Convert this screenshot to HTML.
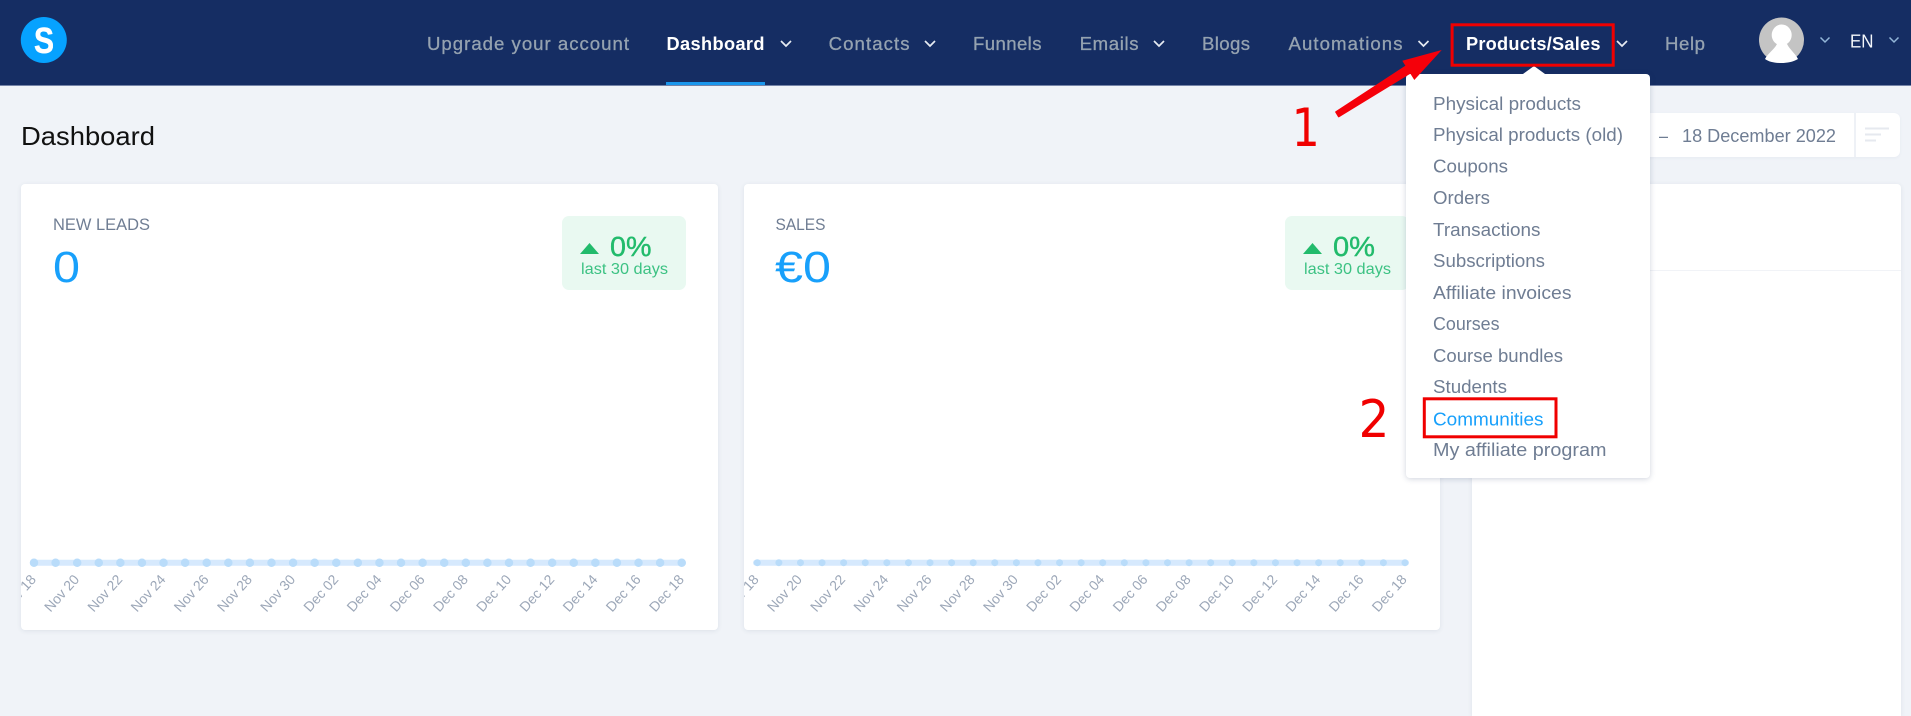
<!DOCTYPE html>
<html lang="en">
<head>
<meta charset="utf-8">
<title>Dashboard</title>
<style>
html,body{margin:0;padding:0;width:1911px;height:716px;overflow:hidden;background:#f0f3f8;font-family:"Liberation Sans",sans-serif}
body{position:relative}
.abs{position:absolute;box-sizing:border-box}
.header{left:0;top:0;width:1911px;height:86px;background:#152d63;border-bottom:1px solid #7584a8}
.active{left:666px;top:82px;width:99px;height:3px;background:#1a96ec}
.card{background:#fff;border-radius:4px;box-shadow:0 1px 5px rgba(60,80,110,.10)}
.badge{background:#e9f9f1;border-radius:7px}
.date{left:1500px;top:113px;width:400px;height:44px;background:#fff;border-radius:6px;box-shadow:0 1px 3px rgba(60,80,110,.05)}
.sep{left:1854px;top:113px;width:2px;height:44px;background:#eef1f6}
.menu{left:1406px;top:74px;width:244px;height:404px;background:#fff;border-radius:4px;box-shadow:0 1px 6px rgba(40,60,100,.22)}
.caret{left:1523px;top:66px;width:0;height:0;border-left:11px solid transparent;border-right:11px solid transparent;border-bottom:8px solid #fff}
svg{position:absolute;left:0;top:0}
.nav{font-size:18.6px;fill:#95a2b0;stroke:#95a2b0;stroke-width:.3}
.on{font-size:18.2px;fill:#fff;font-weight:bold}
.m{font-size:18.5px;fill:#6f7d93}
.l{font-size:14px;fill:#9ca7b8}
.chev{fill:none;stroke:#e6ebf2;stroke-width:1.7}
</style>
</head>
<body>
<div class="abs header"></div>
<div class="abs active"></div>

<div class="abs card" style="left:21px;top:184px;width:697px;height:446px"></div>
<div class="abs card" style="left:744px;top:184px;width:696px;height:446px"></div>
<div class="abs card" style="left:1472px;top:184px;width:429px;height:532px;border-radius:4px 4px 0 0"></div>
<div class="abs" style="left:1472px;top:270px;width:429px;height:1px;background:#f1f3f7"></div>
<div class="abs badge" style="left:562px;top:216px;width:124px;height:74px"></div>
<div class="abs badge" style="left:1285px;top:216px;width:124px;height:74px"></div>
<div class="abs date"></div>
<div class="abs sep"></div>

<svg width="1911" height="716" viewBox="0 0 1911 716" xmlns="http://www.w3.org/2000/svg">
<defs>
<clipPath id="c1"><rect x="21" y="540" width="697" height="90"/></clipPath>
<clipPath id="c2"><rect x="744" y="540" width="696" height="90"/></clipPath>
</defs>
<text x="21" y="145" font-size="26" fill="#111" textLength="134" lengthAdjust="spacingAndGlyphs">Dashboard</text>

<text x="53" y="230" font-size="17" fill="#6f7d93" textLength="97" lengthAdjust="spacingAndGlyphs">NEW LEADS</text>
<text x="53" y="282" font-size="44" fill="#18a0fb" textLength="27" lengthAdjust="spacingAndGlyphs">0</text>
<path d="M580 254L589.5 243L599 254Z" fill="#22bb6c"/>
<text x="610" y="256" font-size="28" fill="#22bb6c" stroke="#22bb6c" stroke-width=".4" textLength="41.5" lengthAdjust="spacingAndGlyphs">0%</text>
<text x="581" y="274" font-size="16" fill="#3cc283" textLength="87" lengthAdjust="spacingAndGlyphs">last 30 days</text>

<text x="775.5" y="230" font-size="17" fill="#6f7d93" textLength="50" lengthAdjust="spacingAndGlyphs">SALES</text>
<text x="775" y="282" font-size="44" fill="#18a0fb" textLength="56" lengthAdjust="spacingAndGlyphs">€0</text>
<path d="M1303 254L1312.5 243L1322 254Z" fill="#22bb6c"/>
<text x="1333" y="256" font-size="28" fill="#22bb6c" stroke="#22bb6c" stroke-width=".4" textLength="42" lengthAdjust="spacingAndGlyphs">0%</text>
<text x="1304" y="274" font-size="16" fill="#3cc283" textLength="87" lengthAdjust="spacingAndGlyphs">last 30 days</text>

<g clip-path="url(#c1)">
<line x1="33" y1="562.7" x2="683" y2="562.7" stroke="#d6e9fd" stroke-width="6" stroke-linecap="round"/>
<line x1="34" y1="562.7" x2="682" y2="562.7" stroke="#b9dcfa" stroke-width="8.5" stroke-linecap="round" stroke-dasharray="0 21.59"/>
<g class="l">
<text text-anchor="end" transform="translate(36.8,580) rotate(-48)" textLength="44" lengthAdjust="spacingAndGlyphs">Nov 18</text>
<text text-anchor="end" transform="translate(80,580) rotate(-48)" textLength="44" lengthAdjust="spacingAndGlyphs">Nov 20</text>
<text text-anchor="end" transform="translate(123.2,580) rotate(-48)" textLength="44" lengthAdjust="spacingAndGlyphs">Nov 22</text>
<text text-anchor="end" transform="translate(166.4,580) rotate(-48)" textLength="44" lengthAdjust="spacingAndGlyphs">Nov 24</text>
<text text-anchor="end" transform="translate(209.6,580) rotate(-48)" textLength="44" lengthAdjust="spacingAndGlyphs">Nov 26</text>
<text text-anchor="end" transform="translate(252.8,580) rotate(-48)" textLength="44" lengthAdjust="spacingAndGlyphs">Nov 28</text>
<text text-anchor="end" transform="translate(296,580) rotate(-48)" textLength="44" lengthAdjust="spacingAndGlyphs">Nov 30</text>
<text text-anchor="end" transform="translate(339.2,580) rotate(-48)" textLength="44" lengthAdjust="spacingAndGlyphs">Dec 02</text>
<text text-anchor="end" transform="translate(382.4,580) rotate(-48)" textLength="44" lengthAdjust="spacingAndGlyphs">Dec 04</text>
<text text-anchor="end" transform="translate(425.6,580) rotate(-48)" textLength="44" lengthAdjust="spacingAndGlyphs">Dec 06</text>
<text text-anchor="end" transform="translate(468.8,580) rotate(-48)" textLength="44" lengthAdjust="spacingAndGlyphs">Dec 08</text>
<text text-anchor="end" transform="translate(512,580) rotate(-48)" textLength="44" lengthAdjust="spacingAndGlyphs">Dec 10</text>
<text text-anchor="end" transform="translate(555.2,580) rotate(-48)" textLength="44" lengthAdjust="spacingAndGlyphs">Dec 12</text>
<text text-anchor="end" transform="translate(598.4,580) rotate(-48)" textLength="44" lengthAdjust="spacingAndGlyphs">Dec 14</text>
<text text-anchor="end" transform="translate(641.6,580) rotate(-48)" textLength="44" lengthAdjust="spacingAndGlyphs">Dec 16</text>
<text text-anchor="end" transform="translate(684.8,580) rotate(-48)" textLength="44" lengthAdjust="spacingAndGlyphs">Dec 18</text>
</g>
</g>

<g clip-path="url(#c2)">
<line x1="756" y1="562.7" x2="1406" y2="562.7" stroke="#d6e9fd" stroke-width="6" stroke-linecap="round"/>
<line x1="757.3" y1="562.7" x2="1405.5" y2="562.7" stroke="#b9dcfa" stroke-width="7" stroke-linecap="round" stroke-dasharray="0 21.59"/>
<g class="l" transform="translate(722.8,0)">
<text text-anchor="end" transform="translate(36.8,580) rotate(-48)" textLength="44" lengthAdjust="spacingAndGlyphs">Nov 18</text>
<text text-anchor="end" transform="translate(80,580) rotate(-48)" textLength="44" lengthAdjust="spacingAndGlyphs">Nov 20</text>
<text text-anchor="end" transform="translate(123.2,580) rotate(-48)" textLength="44" lengthAdjust="spacingAndGlyphs">Nov 22</text>
<text text-anchor="end" transform="translate(166.4,580) rotate(-48)" textLength="44" lengthAdjust="spacingAndGlyphs">Nov 24</text>
<text text-anchor="end" transform="translate(209.6,580) rotate(-48)" textLength="44" lengthAdjust="spacingAndGlyphs">Nov 26</text>
<text text-anchor="end" transform="translate(252.8,580) rotate(-48)" textLength="44" lengthAdjust="spacingAndGlyphs">Nov 28</text>
<text text-anchor="end" transform="translate(296,580) rotate(-48)" textLength="44" lengthAdjust="spacingAndGlyphs">Nov 30</text>
<text text-anchor="end" transform="translate(339.2,580) rotate(-48)" textLength="44" lengthAdjust="spacingAndGlyphs">Dec 02</text>
<text text-anchor="end" transform="translate(382.4,580) rotate(-48)" textLength="44" lengthAdjust="spacingAndGlyphs">Dec 04</text>
<text text-anchor="end" transform="translate(425.6,580) rotate(-48)" textLength="44" lengthAdjust="spacingAndGlyphs">Dec 06</text>
<text text-anchor="end" transform="translate(468.8,580) rotate(-48)" textLength="44" lengthAdjust="spacingAndGlyphs">Dec 08</text>
<text text-anchor="end" transform="translate(512,580) rotate(-48)" textLength="44" lengthAdjust="spacingAndGlyphs">Dec 10</text>
<text text-anchor="end" transform="translate(555.2,580) rotate(-48)" textLength="44" lengthAdjust="spacingAndGlyphs">Dec 12</text>
<text text-anchor="end" transform="translate(598.4,580) rotate(-48)" textLength="44" lengthAdjust="spacingAndGlyphs">Dec 14</text>
<text text-anchor="end" transform="translate(641.6,580) rotate(-48)" textLength="44" lengthAdjust="spacingAndGlyphs">Dec 16</text>
<text text-anchor="end" transform="translate(684.8,580) rotate(-48)" textLength="44" lengthAdjust="spacingAndGlyphs">Dec 18</text>
</g>
</g>

<text x="1659" y="142" font-size="18" fill="#6f7d93" textLength="9" lengthAdjust="spacingAndGlyphs">–</text>
<text x="1682" y="142" font-size="18" fill="#6f7d93" textLength="154" lengthAdjust="spacingAndGlyphs">18 December 2022</text>
<path d="M1865 128.5H1889M1865 134.5H1881M1865 140.5H1876" stroke="#e6e9ef" stroke-width="2" fill="none"/>

<circle cx="43.8" cy="40" r="23" fill="#06a2ff"/>
<text x="34" y="53" font-size="36" font-weight="bold" fill="#fff" stroke="#fff" stroke-width=".5" textLength="20" lengthAdjust="spacingAndGlyphs">S</text>

<text class="nav" x="427" y="50" textLength="202" lengthAdjust="spacing">Upgrade your account</text>
<text class="on" x="666.5" y="50" textLength="98" lengthAdjust="spacing">Dashboard</text>
<path class="chev" d="M781 41L786 46L791 41"/>
<text class="nav" x="828.6" y="50" textLength="81" lengthAdjust="spacing">Contacts</text>
<path class="chev" d="M925 41L930 46L935 41"/>
<text class="nav" x="973" y="50" textLength="68.5" lengthAdjust="spacing">Funnels</text>
<text class="nav" x="1079.6" y="50" textLength="59" lengthAdjust="spacing">Emails</text>
<path class="chev" d="M1154 41L1159 46L1164 41"/>
<text class="nav" x="1202" y="50" textLength="48" lengthAdjust="spacing">Blogs</text>
<text class="nav" x="1288.5" y="50" textLength="114" lengthAdjust="spacing">Automations</text>
<path class="chev" d="M1418.5 41L1423.5 46L1428.5 41"/>
<text class="on" x="1466" y="50" textLength="134.5" lengthAdjust="spacing">Products/Sales</text>
<path class="chev" d="M1617 41L1622 46L1627 41"/>
<text class="nav" x="1665" y="50" textLength="40" lengthAdjust="spacing">Help</text>

<circle cx="1781.5" cy="40" r="22.5" fill="#c4c4c4"/>
<ellipse cx="1781.7" cy="35" rx="10" ry="10.5" fill="#fff"/>
<path d="M1765 59C1768 53 1774 50 1777 44H1787C1790 50 1795 53 1798 59C1793 62 1787 63 1781.5 63C1775 63 1769 62 1765 59Z" fill="#fff"/>
<path d="M1820.5 37.5L1825 42L1829.5 37.5" fill="none" stroke="#93b6d8" stroke-width="1.5"/>
<text x="1850" y="47.7" font-size="18" fill="#f4f7fb" textLength="23.5" lengthAdjust="spacingAndGlyphs">EN</text>
<path d="M1889.5 37.5L1894 42L1898.5 37.5" fill="none" stroke="#93b6d8" stroke-width="1.5"/>
</svg>

<div class="abs menu"></div>
<div class="abs caret"></div>

<svg width="1911" height="716" viewBox="0 0 1911 716" xmlns="http://www.w3.org/2000/svg">
<text class="m" x="1433" y="110" textLength="148" lengthAdjust="spacingAndGlyphs">Physical products</text>
<text class="m" x="1433" y="141" textLength="190" lengthAdjust="spacingAndGlyphs">Physical products (old)</text>
<text class="m" x="1433" y="172.7" textLength="75" lengthAdjust="spacingAndGlyphs">Coupons</text>
<text class="m" x="1433" y="204" textLength="57" lengthAdjust="spacingAndGlyphs">Orders</text>
<text class="m" x="1433" y="236" textLength="107.5" lengthAdjust="spacingAndGlyphs">Transactions</text>
<text class="m" x="1433" y="267" textLength="112" lengthAdjust="spacingAndGlyphs">Subscriptions</text>
<text class="m" x="1433" y="299" textLength="138.5" lengthAdjust="spacingAndGlyphs">Affiliate invoices</text>
<text class="m" x="1433" y="330" textLength="66.5" lengthAdjust="spacingAndGlyphs">Courses</text>
<text class="m" x="1433" y="362" textLength="130" lengthAdjust="spacingAndGlyphs">Course bundles</text>
<text class="m" x="1433" y="393" textLength="74" lengthAdjust="spacingAndGlyphs">Students</text>
<text class="m" x="1433" y="425.3" style="fill:#18a0fb" textLength="110.5" lengthAdjust="spacingAndGlyphs">Communities</text>
<text class="m" x="1433" y="456" textLength="173.5" lengthAdjust="spacingAndGlyphs">My affiliate program</text>

<rect x="1452.1" y="24.8" width="161.1" height="40.4" fill="none" stroke="#f00000" stroke-width="3"/>
<rect x="1424.3" y="398.8" width="131.7" height="38" fill="none" stroke="#f00000" stroke-width="3"/>
<path d="M1335.9 112L1338.7 116.6L1411.1 72.4L1406.9 65.6Z" fill="#f5000a" stroke="#f5000a" stroke-width="1.5" stroke-linejoin="round"/>
<path d="M1441.7 50L1402.3 60.7L1414.3 80Z" fill="#f5000a"/>
<text x="1291.8" y="146" font-family="'DejaVu Sans',sans-serif" font-size="53" fill="#f00000" textLength="28" lengthAdjust="spacingAndGlyphs">1</text>
<text x="1358.5" y="437" font-family="'DejaVu Sans',sans-serif" font-size="52" fill="#f00000" textLength="31" lengthAdjust="spacingAndGlyphs">2</text>
</svg>
</body>
</html>
